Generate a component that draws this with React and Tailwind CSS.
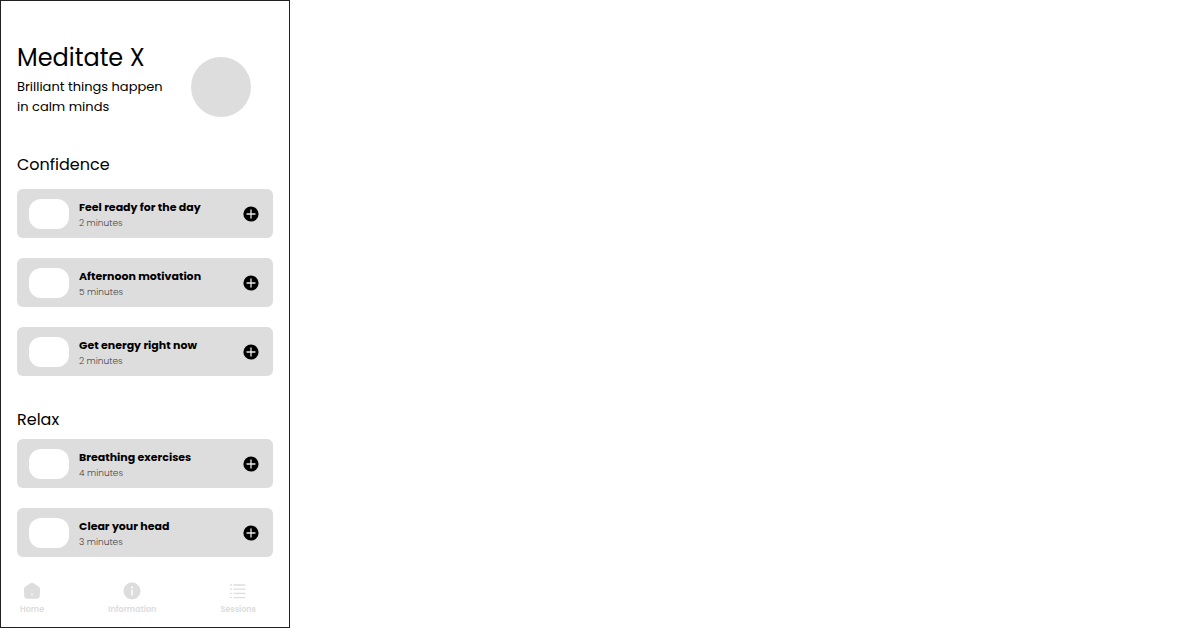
const SECTIONS = [
  {
    title: 'Confidence',
    className: 'mt-9',
    listClassName: 'mt-3',
    items: [
      { name: 'Feel ready for the day', length: '2 minutes' },
      { name: 'Afternoon motivation', length: '5 minutes' },
      { name: 'Get energy right now', length: '2 minutes' },
    ],
  },
  {
    title: 'Relax',
    className: 'mt-8',
    listClassName: 'mt-[7px]',
    items: [
      { name: 'Breathing exercises', length: '4 minutes' },
      { name: 'Clear your head', length: '3 minutes' },
    ],
  },
]

function PlusIcon() {
  return (
    <svg viewBox="0 0 16 16" className="size-4" aria-hidden="true">
      <circle cx="8" cy="8" r="7.6" fill="#000" />
      <path d="M8 4v8M4 8h8" stroke="#e8e8e8" strokeWidth="1.3" strokeLinecap="round" />
    </svg>
  )
}

function HomeIcon() {
  return (
    <svg viewBox="0 0 18 18" className="size-[18px]" aria-hidden="true">
      <path
        d="M7.4 1.3a3 3 0 0 1 3.2 0l5 3.1a3.2 3.2 0 0 1 1.5 3l-.3 6.4a3.2 3.2 0 0 1-3.2 3H4.4a3.2 3.2 0 0 1-3.2-3L.9 7.4a3.2 3.2 0 0 1 1.5-3z"
        fill="currentColor"
      />
      <path d="M9 12v1" stroke="#fff" strokeWidth="1.3" strokeLinecap="round" />
    </svg>
  )
}

function InfoIcon() {
  return (
    <svg viewBox="0 0 18 18" className="size-[18px]" aria-hidden="true">
      <circle cx="9" cy="9" r="8.5" fill="currentColor" />
      <circle cx="9" cy="5.4" r="1" fill="#fff" />
      <path d="M9 8.2v4.8" stroke="#fff" strokeWidth="1.5" strokeLinecap="round" />
    </svg>
  )
}

function ListIcon() {
  return (
    <svg viewBox="0 0 18 18" className="size-[18px]" aria-hidden="true">
      <path
        d="M1.5 3h1M1.5 7.2h1M1.5 11.4h1M1.5 15.6h1M5 3h11M5 7.2h11M5 11.4h11M5 15.6h11"
        stroke="currentColor"
        strokeWidth="1.3"
        strokeLinecap="round"
      />
    </svg>
  )
}

const NAV = [
  { label: 'Home', Icon: HomeIcon },
  { label: 'Information', Icon: InfoIcon },
  { label: 'Sessions', Icon: ListIcon },
]

function SessionCard({ name, length }) {
  return (
    <li className="flex min-h-[49px] items-center rounded-md bg-[#dddddd] pl-3 pr-[14px]">
      <div className="h-[30px] w-10 shrink-0 rounded-xl bg-white" />
      <div className="ml-[10px] flex-1 pt-[3px]">
        <h3 className="text-[11px] leading-4 font-bold">{name}</h3>
        <p className="text-[9px] leading-4 font-light text-[#444444]">{length}</p>
      </div>
      <button type="button" aria-label={`Add ${name}`}>
        <PlusIcon />
      </button>
    </li>
  )
}

export default function App() {
  return (
    <div className="min-h-screen bg-white font-['Poppins','Inter',sans-serif] text-black">
      <div className="flex min-h-screen w-full max-w-[290px] flex-col border border-[#231f20] px-4">
        <header className="flex items-end justify-between pt-[41px] pr-[22px]">
          <div>
            <h1 className="text-2xl leading-8">Meditate X</h1>
            <p className="mt-[3px] text-[13px] leading-5">
              Brilliant things happen
              <br />
              in calm minds
            </p>
          </div>
          <div className="size-[60px] shrink-0 rounded-full bg-[#dddddd]" />
        </header>

        <main>
          {SECTIONS.map((section) => (
            <section key={section.title} className={section.className}>
              <h2 className="text-base leading-6">{section.title}</h2>
              <ul className={`flex flex-col gap-5 ${section.listClassName}`}>
                {section.items.map((item) => (
                  <SessionCard key={item.name} {...item} />
                ))}
              </ul>
            </section>
          ))}
        </main>

        <nav className="mt-auto flex justify-between pt-5 pr-[17px] pb-[11px] pl-[3px] text-[#dddddd]">
          {NAV.map(({ label, Icon }) => (
            <a key={label} href="#" className="flex flex-col items-center gap-1">
              <Icon />
              <span className="text-[8px] leading-3 font-semibold">{label}</span>
            </a>
          ))}
        </nav>
      </div>
    </div>
  )
}
